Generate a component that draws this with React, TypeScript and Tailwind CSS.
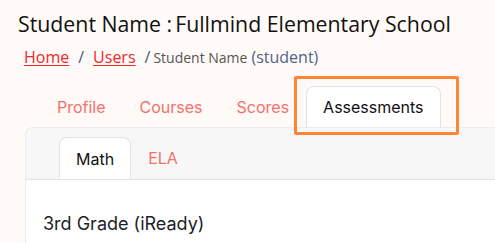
export default function App() {
  const tabs = ['Profile', 'Courses', 'Scores']

  return (
    <div className="h-[243px] w-[495px] overflow-hidden bg-[#fffaf7]">
      <h1 className="pl-[18px] pt-[9px] font-['Open_Sans',sans-serif] text-[21.3px] leading-[30px] text-[#111]">
        Student Name :<span className="ml-[3px]">Fullmind Elementary School</span>
      </h1>

      <nav className="mt-[8px] flex items-baseline pl-[24px] font-['Open_Sans',sans-serif] text-[16px] leading-[20px]">
        <a className="text-[#f0282a] underline underline-offset-2">Home</a>
        <span className="mx-[9px] text-[#3f5876]">/</span>
        <a className="text-[#f0282a] underline underline-offset-2">Users</a>
        <span className="ml-[9px] mr-[3px] text-[#3f5876]">/</span>
        <span className="text-[14px] text-[#555]">Student Name</span>
        <span className="ml-[4px] text-[#4f6485]">(student)</span>
      </nav>

      <div className="mt-[18px] flex pl-[40px] font-['Inter',sans-serif] text-[16px]">
        {tabs.map((tab) => (
          <div key={tab} className="flex h-[41px] items-center px-[17px] text-[#f4706a]">
            {tab}
          </div>
        ))}
        <div className="relative">
          <div className="flex h-[41px] items-center rounded-t-lg border border-b-0 border-[#dfe3e8] bg-white px-[16px] text-[#111]">
            Assessments
          </div>
          <div className="absolute -left-[12px] -top-[10px] h-[59px] w-[165px] rounded-[2px] border-[3px] border-[#ff8533]" />
        </div>
      </div>

      <div className="ml-[25px] rounded-tl-lg border-l border-t border-[#ececec] bg-[#f7f7f8]">
        <div className="flex pl-[33px] pt-[9px] font-['Inter',sans-serif] text-[16px]">
          <div className="relative -mb-px flex h-[42px] items-center rounded-t-lg border border-b-0 border-[#dfe3e8] bg-white px-[16px] text-[#111]">
            Math
          </div>
          <div className="flex h-[42px] items-center px-[17px] text-[#f4706a]">ELA</div>
        </div>
        <div className="h-[80px] border-t border-[#e4e4e4] bg-white pl-[17px] pt-[32px]">
          <h2 className="font-['Inter',sans-serif] text-[18px] leading-[24px] text-[#1b1f2a]">
            3rd Grade (iReady)
          </h2>
        </div>
      </div>
    </div>
  )
}
